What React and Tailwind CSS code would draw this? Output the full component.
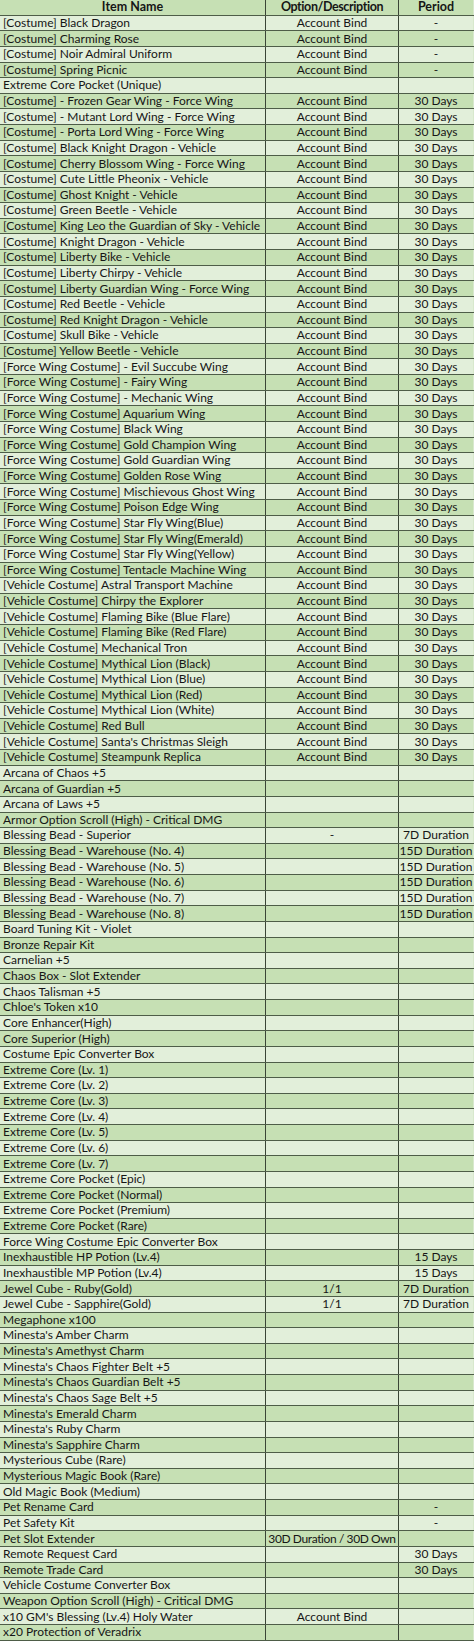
const rows = [
  ["[Costume] Black Dragon", "Account Bind", "-"],
  ["[Costume] Charming Rose", "Account Bind", "-"],
  ["[Costume] Noir Admiral Uniform", "Account Bind", "-"],
  ["[Costume] Spring Picnic", "Account Bind", "-"],
  ["Extreme Core Pocket (Unique)", "", ""],
  ["[Costume] - Frozen Gear Wing - Force Wing", "Account Bind", "30 Days"],
  ["[Costume] - Mutant Lord Wing - Force Wing", "Account Bind", "30 Days"],
  ["[Costume] - Porta Lord Wing - Force Wing", "Account Bind", "30 Days"],
  ["[Costume] Black Knight Dragon - Vehicle", "Account Bind", "30 Days"],
  ["[Costume] Cherry Blossom Wing - Force Wing", "Account Bind", "30 Days"],
  ["[Costume] Cute Little Pheonix - Vehicle", "Account Bind", "30 Days"],
  ["[Costume] Ghost Knight - Vehicle", "Account Bind", "30 Days"],
  ["[Costume] Green Beetle - Vehicle", "Account Bind", "30 Days"],
  ["[Costume] King Leo the Guardian of Sky - Vehicle", "Account Bind", "30 Days"],
  ["[Costume] Knight Dragon - Vehicle", "Account Bind", "30 Days"],
  ["[Costume] Liberty Bike - Vehicle", "Account Bind", "30 Days"],
  ["[Costume] Liberty Chirpy - Vehicle", "Account Bind", "30 Days"],
  ["[Costume] Liberty Guardian Wing - Force Wing", "Account Bind", "30 Days"],
  ["[Costume] Red Beetle - Vehicle", "Account Bind", "30 Days"],
  ["[Costume] Red Knight Dragon - Vehicle", "Account Bind", "30 Days"],
  ["[Costume] Skull Bike - Vehicle", "Account Bind", "30 Days"],
  ["[Costume] Yellow Beetle - Vehicle", "Account Bind", "30 Days"],
  ["[Force Wing Costume] - Evil Succube Wing", "Account Bind", "30 Days"],
  ["[Force Wing Costume] - Fairy Wing", "Account Bind", "30 Days"],
  ["[Force Wing Costume] - Mechanic Wing", "Account Bind", "30 Days"],
  ["[Force Wing Costume] Aquarium Wing", "Account Bind", "30 Days"],
  ["[Force Wing Costume] Black Wing", "Account Bind", "30 Days"],
  ["[Force Wing Costume] Gold Champion Wing", "Account Bind", "30 Days"],
  ["[Force Wing Costume] Gold Guardian Wing", "Account Bind", "30 Days"],
  ["[Force Wing Costume] Golden Rose Wing", "Account Bind", "30 Days"],
  ["[Force Wing Costume] Mischievous Ghost Wing", "Account Bind", "30 Days"],
  ["[Force Wing Costume] Poison Edge Wing", "Account Bind", "30 Days"],
  ["[Force Wing Costume] Star Fly Wing(Blue)", "Account Bind", "30 Days"],
  ["[Force Wing Costume] Star Fly Wing(Emerald)", "Account Bind", "30 Days"],
  ["[Force Wing Costume] Star Fly Wing(Yellow)", "Account Bind", "30 Days"],
  ["[Force Wing Costume] Tentacle Machine Wing", "Account Bind", "30 Days"],
  ["[Vehicle Costume] Astral Transport Machine", "Account Bind", "30 Days"],
  ["[Vehicle Costume] Chirpy the Explorer", "Account Bind", "30 Days"],
  ["[Vehicle Costume] Flaming Bike (Blue Flare)", "Account Bind", "30 Days"],
  ["[Vehicle Costume] Flaming Bike (Red Flare)", "Account Bind", "30 Days"],
  ["[Vehicle Costume] Mechanical Tron", "Account Bind", "30 Days"],
  ["[Vehicle Costume] Mythical Lion (Black)", "Account Bind", "30 Days"],
  ["[Vehicle Costume] Mythical Lion (Blue)", "Account Bind", "30 Days"],
  ["[Vehicle Costume] Mythical Lion (Red)", "Account Bind", "30 Days"],
  ["[Vehicle Costume] Mythical Lion (White)", "Account Bind", "30 Days"],
  ["[Vehicle Costume] Red Bull", "Account Bind", "30 Days"],
  ["[Vehicle Costume] Santa's Christmas Sleigh", "Account Bind", "30 Days"],
  ["[Vehicle Costume] Steampunk Replica", "Account Bind", "30 Days"],
  ["Arcana of Chaos +5", "", ""],
  ["Arcana of Guardian +5", "", ""],
  ["Arcana of Laws +5", "", ""],
  ["Armor Option Scroll (High) - Critical DMG", "", ""],
  ["Blessing Bead - Superior", "-", "7D Duration"],
  ["Blessing Bead - Warehouse (No. 4)", "", "15D Duration"],
  ["Blessing Bead - Warehouse (No. 5)", "", "15D Duration"],
  ["Blessing Bead - Warehouse (No. 6)", "", "15D Duration"],
  ["Blessing Bead - Warehouse (No. 7)", "", "15D Duration"],
  ["Blessing Bead - Warehouse (No. 8)", "", "15D Duration"],
  ["Board Tuning Kit - Violet", "", ""],
  ["Bronze Repair Kit", "", ""],
  ["Carnelian +5", "", ""],
  ["Chaos Box - Slot Extender", "", ""],
  ["Chaos Talisman +5", "", ""],
  ["Chloe's Token x10", "", ""],
  ["Core Enhancer(High)", "", ""],
  ["Core Superior (High)", "", ""],
  ["Costume Epic Converter Box", "", ""],
  ["Extreme Core (Lv. 1)", "", ""],
  ["Extreme Core (Lv. 2)", "", ""],
  ["Extreme Core (Lv. 3)", "", ""],
  ["Extreme Core (Lv. 4)", "", ""],
  ["Extreme Core (Lv. 5)", "", ""],
  ["Extreme Core (Lv. 6)", "", ""],
  ["Extreme Core (Lv. 7)", "", ""],
  ["Extreme Core Pocket (Epic)", "", ""],
  ["Extreme Core Pocket (Normal)", "", ""],
  ["Extreme Core Pocket (Premium)", "", ""],
  ["Extreme Core Pocket (Rare)", "", ""],
  ["Force Wing Costume Epic Converter Box", "", ""],
  ["Inexhaustible HP Potion (Lv.4)", "", "15 Days"],
  ["Inexhaustible MP Potion (Lv.4)", "", "15 Days"],
  ["Jewel Cube - Ruby(Gold)", "1/1", "7D Duration"],
  ["Jewel Cube - Sapphire(Gold)", "1/1", "7D Duration"],
  ["Megaphone x100", "", ""],
  ["Minesta's Amber Charm", "", ""],
  ["Minesta's Amethyst Charm", "", ""],
  ["Minesta's Chaos Fighter Belt +5", "", ""],
  ["Minesta's Chaos Guardian Belt +5", "", ""],
  ["Minesta's Chaos Sage Belt +5", "", ""],
  ["Minesta's Emerald Charm", "", ""],
  ["Minesta's Ruby Charm", "", ""],
  ["Minesta's Sapphire Charm", "", ""],
  ["Mysterious Cube (Rare)", "", ""],
  ["Mysterious Magic Book (Rare)", "", ""],
  ["Old Magic Book (Medium)", "", ""],
  ["Pet Rename Card", "", "-"],
  ["Pet Safety Kit", "", "-"],
  ["Pet Slot Extender", "30D Duration / 30D Own", ""],
  ["Remote Request Card", "", "30 Days"],
  ["Remote Trade Card", "", "30 Days"],
  ["Vehicle Costume Converter Box", "", ""],
  ["Weapon Option Scroll (High) - Critical DMG", "", ""],
  ["x10 GM's Blessing (Lv.4) Holy Water", "Account Bind", ""],
  ["x20 Protection of Veradrix", "", ""],
];

function Row({ cells, header, light }) {
  const bg = light ? "bg-[#e2efda]" : "bg-[#c6e0b4]";
  const longDesc = cells[1].length > 16;
  return (
    <div
      className={`flex-1 grid grid-cols-[265px_133px_1fr] min-h-0 border-b border-[#4e5d48] ${bg} ${
        header ? "font-bold text-[12.5px]" : ""
      }`}
    >
      <div className={`flex items-center px-[3px] leading-none whitespace-nowrap ${header ? "justify-center" : ""}`}>
        {cells[0]}
      </div>
      <div
        className={`flex items-center justify-center border-l border-[#3a4536] leading-none whitespace-nowrap ${
          longDesc ? "tracking-[-0.4px]" : ""
        }`}
      >
        {cells[1]}
      </div>
      <div className="flex items-center justify-center border-l border-[#3a4536] border-r border-r-[#d8e8cd] leading-none whitespace-nowrap">
        {cells[2]}
      </div>
    </div>
  );
}

export default function App() {
  return (
    <div className="w-[474px] h-[1641px] flex flex-col bg-[#c6e0b4] text-[#161616] text-[12px] font-['Lato',sans-serif]">
      <Row cells={["Item Name", "Option/Description", "Period"]} header />
      {rows.map((r, i) => (
        <Row key={i} cells={r} light={i % 2 === 0} />
      ))}
    </div>
  );
}
